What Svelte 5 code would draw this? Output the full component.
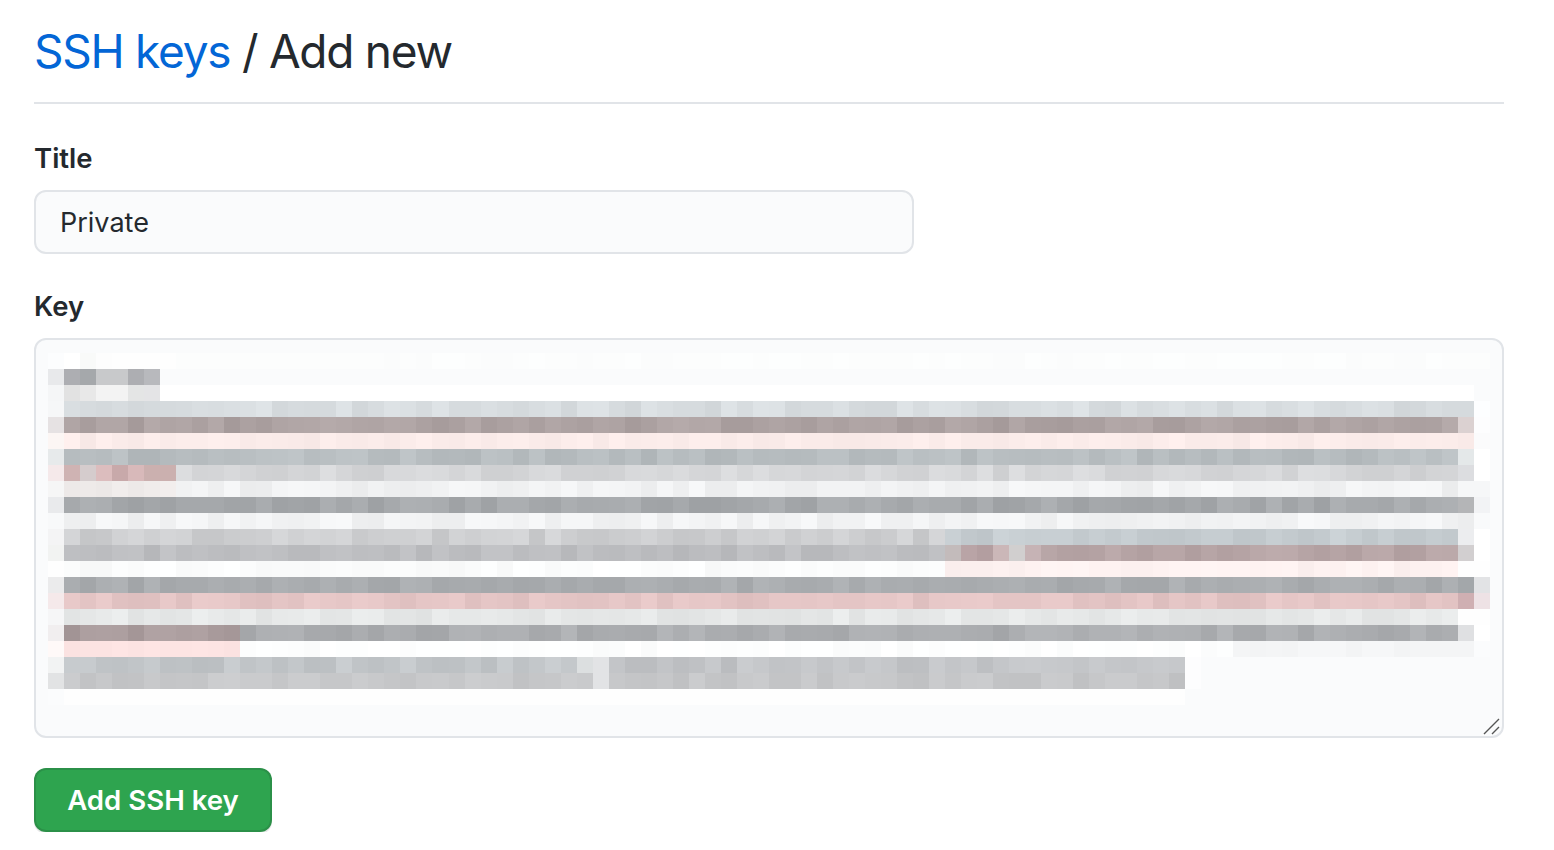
<script lang="ts">
  // Blurred key: 16px mosaic, rows of [from, to, colour, jitter] column ranges
  type Seg = [number, number, string, number]

  const CELL = 16.02
  const LAST = 90 // column 89 is the faint edge, 1474–1490

  const ROWS: Seg[][] = [
    [[0, 1, '#fcfdfe', 0], [1, 2, '#ffffff', 0], [2, 3, '#f9faf9', 0], [3, 8, '#fefefe', 1], [8, LAST, '#fcfdfd', 1]],
    [[0, 1, '#e8e9eb', 0], [1, 2, '#adaeb2', 0], [2, 3, '#a5a8ab', 0], [3, 5, '#c8c9cb', 0], [5, 6, '#adaeb2', 0], [6, 7, '#b8b9bd', 0]],
    [[0, 1, '#f5f6f7', 0], [1, 2, '#e2e2e2', 0], [2, 3, '#e8e8e8', 0], [3, 5, '#f3f3f3', 0], [5, 6, '#e4e5e5', 0], [6, 7, '#e4e4e6', 0], [7, 89, '#ffffff', 0]],
    [[0, 1, '#f6f7f8', 0], [1, 89, '#d8dde0', 7], [89, LAST, '#fdfeff', 0]],
    [[0, 1, '#e6e2e3', 0], [1, 88, '#ada2a2', 8], [88, 89, '#dbd1d1', 0], [89, LAST, '#fdfdfe', 0]],
    [[0, 1, '#fcf6f4', 0], [1, 89, '#fbecea', 4], [89, LAST, '#fbfbfc', 0]],
    [[0, 1, '#e7eaeb', 0], [1, 88, '#b7bdc0', 8], [88, 89, '#e4e8e9', 0], [89, LAST, '#ffffff', 0]],
    [[0, 1, '#f5e9ea', 0], [1, 2, '#cfb3b3', 0], [2, 3, '#d5cccd', 0], [3, 4, '#dcbdbe', 0], [4, 5, '#c8a9aa', 0], [5, 6, '#d8b9ba', 0], [6, 8, '#cbb0af', 0], [8, 88, '#d5d6d8', 8], [88, 89, '#dcdde0', 0], [89, LAST, '#ffffff', 0]],
    [[0, 1, '#f6f6f6', 0], [1, 8, '#efebea', 3], [8, 88, '#f1f2f3', 6], [88, LAST, '#f6f7f8', 0]],
    [[0, 1, '#e9eaec', 0], [1, 88, '#a6a9ac', 8], [88, 89, '#b4b5b7', 0], [89, LAST, '#f2f3f5', 0]],
    [[0, 1, '#f8f9fa', 0], [1, 89, '#f2f3f4', 6], [89, LAST, '#f9fafb', 0]],
    [[0, 1, '#f4f4f5', 0], [1, 56, '#cecfd1', 9], [56, 88, '#c5ccd0', 7], [88, 89, '#ecedef', 0], [89, LAST, '#ffffff', 0]],
    [[0, 1, '#f2f3f2', 0], [1, 56, '#bcbdc0', 7], [56, 57, '#c3bbbb', 0], [57, 59, '#b7a2a4', 4], [59, 60, '#cbb7b8', 0], [60, 61, '#d1cfcf', 0], [61, 62, '#c6b3b5', 0], [62, 88, '#b6a4a5', 7], [88, 89, '#d2cfd0', 0], [89, LAST, '#ffffff', 0]],
    [[0, 1, '#fefefe', 0], [1, 56, '#fbfcfc', 4], [56, 88, '#fdf1f0', 4], [88, LAST, '#fefefe', 0]],
    [[0, 1, '#ebebec', 0], [1, 88, '#a9acaf', 7], [88, 89, '#a3a7aa', 0], [89, LAST, '#e2e3e5', 0]],
    [[0, 1, '#f5e9ea', 0], [1, 88, '#e4c5c5', 7], [88, 89, '#cfafb2', 0], [89, LAST, '#eee2e5', 0]],
    [[0, 1, '#f6f6f7', 0], [1, 88, '#e6e8e8', 6], [88, LAST, '#fefefe', 0]],
    [[0, 1, '#f1eeef', 0], [1, 12, '#a99b9c', 8], [12, 88, '#abadb0', 8], [88, 89, '#dfe0e2', 0], [89, LAST, '#ffffff', 0]],
    [[0, 1, '#fff9f8', 0], [1, 12, '#fde4e3', 2], [12, 74, '#fdfefe', 3], [74, 89, '#f5f6f7', 3], [89, LAST, '#fbfcfd', 0]],
    [[0, 1, '#f2f3f3', 0], [1, 33, '#c2c6c9', 8], [33, 34, '#dcdfe0', 0], [34, 35, '#e2e3e5', 0], [35, 71, '#c2c4c7', 8], [71, 72, '#fdfdfe', 0]],
    [[0, 1, '#e2e3e4', 0], [1, 34, '#c7c8ca', 6], [34, 35, '#e2e3e5', 0], [35, 71, '#c5c6c8', 6], [71, 72, '#fdfdfe', 0]],
    [[0, 1, '#fbfcfd', 0], [1, 71, '#fefefe', 0]],
  ]

  let seed = 1337
  function rand() {
    seed = (seed * 1664525 + 1013904223) % 4294967296
    return seed / 4294967296
  }

  function shade(hex: string, amount: number) {
    const n = parseInt(hex.slice(1), 16)
    const d = Math.round((rand() * 2 - 1) * amount)
    const ch = (v: number) => Math.max(0, Math.min(255, v + d))
    return `rgb(${ch(n >> 16)},${ch((n >> 8) & 255)},${ch(n & 255)})`
  }

  const cells = ROWS.flatMap((segs, y) =>
    segs.flatMap(([from, to, color, jitter]) =>
      Array.from({ length: to - from }, (_, i) => ({
        x: (from + i) * CELL,
        y: y * CELL,
        fill: shade(color, jitter),
      }))
    )
  )

  let title = $state('Private')
</script>

<main class="page">
  <h2 class="subhead"><a href="#keys">SSH keys</a> / Add new</h2>

  <form class="form" onsubmit={(e) => e.preventDefault()}>
    <div class="form-group">
      <label for="ssh-title">Title</label>
      <input id="ssh-title" class="title-input" type="text" bind:value={title} />
    </div>

    <div class="form-group">
      <label for="ssh-key">Key</label>
      <div class="key-wrap">
        <textarea id="ssh-key" class="key-input"></textarea>
        <!-- redacted key contents -->
        <svg class="mosaic" width="1442" height="353" aria-hidden="true" shape-rendering="crispEdges">
          {#each cells as c}
            <rect x={c.x} y={c.y} width={CELL} height={CELL} fill={c.fill} />
          {/each}
        </svg>
        <svg class="grip" width="18" height="18" viewBox="0 0 18 18" aria-hidden="true">
          <path d="M1 16 16 1M9 16l7-7" fill="none" stroke="#555" stroke-width="1.4" />
        </svg>
      </div>
    </div>

    <button class="btn-primary" type="submit">Add SSH key</button>
  </form>
</main>

<style>
  :global(body) {
    margin: 0;
    background: #fff;
    color: #24292e;
    font-family: Inter, "Liberation Sans", sans-serif;
  }

  .page {
    padding: 0 50px 0 34px;
  }

  .subhead {
    margin: 0 0 32px;
    padding: 21px 0 21px;
    border-bottom: 2px solid #e1e4e8;
    font-size: 46px;
    font-weight: 400;
    line-height: 60px;
    letter-spacing: -1.27px;
  }
  .subhead a {
    color: #0366d6;
    text-decoration: none;
  }

  .form-group {
    margin-bottom: 30px;
  }

  label {
    display: block;
    margin-bottom: 10px;
    font-size: 27.5px;
    font-weight: 600;
    line-height: 44px;
  }

  .title-input,
  .key-input {
    display: block;
    box-sizing: border-box;
    border: 2px solid #e1e4e8;
    border-radius: 12px;
    background: #fafbfc;
    color: #24292e;
    font: inherit;
    outline: none;
  }

  .title-input {
    width: 880px;
    height: 64px;
    padding: 0 24px;
    font-size: 27px;
  }

  .key-wrap {
    position: relative;
  }

  .key-input {
    width: 100%;
    height: 400px;
    padding: 16px;
    resize: none;
  }

  .mosaic {
    position: absolute;
    top: 15px;
    left: 14px;
    filter: blur(0.5px);
    pointer-events: none;
  }

  .grip {
    position: absolute;
    right: 3px;
    bottom: 2px;
    pointer-events: none;
  }

  .btn-primary {
    display: block;
    box-sizing: border-box;
    width: 238px;
    height: 64px;
    border: 2px solid rgba(27, 31, 35, 0.15);
    border-radius: 12px;
    background: #2ea44f;
    box-shadow: 0 2px 0 rgba(27, 31, 35, 0.1);
    color: #fff;
    font: inherit;
    font-size: 27.6px;
    font-weight: 600;
    cursor: pointer;
  }
</style>
